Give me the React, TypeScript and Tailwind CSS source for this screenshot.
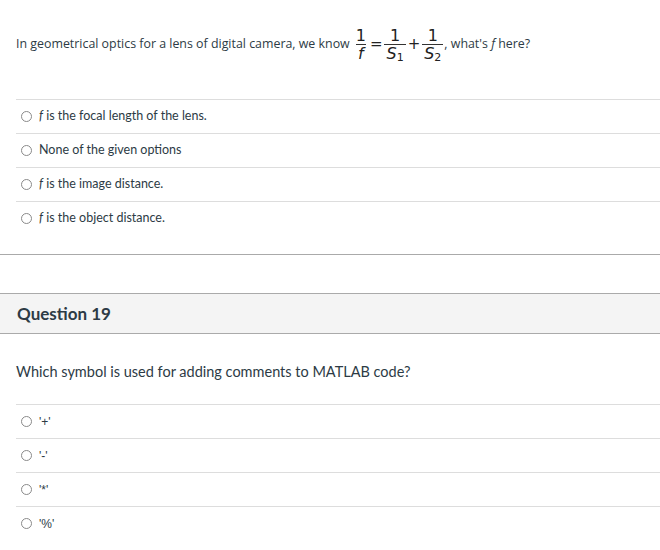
const Radio = () => (
  <span className="inline-block w-[11px] h-[11px] rounded-full border border-[#8a8a8a] bg-white shrink-0" />
);

const Frac = ({ top, bottom }: { top: React.ReactNode; bottom: React.ReactNode }) => (
  <span className="inline-flex flex-col items-center mx-[1px]">
    <span className="text-[16px] leading-[17px] px-[2px]">{top}</span>
    <span className="text-[16px] leading-[18px] px-[2px] border-t border-[#333]">{bottom}</span>
  </span>
);

const optionsA = [
  { f: true, text: " is the focal length of the lens." },
  { f: false, text: "None of the given options" },
  { f: true, text: " is the image distance." },
  { f: true, text: " is the object distance." },
];

const optionsB = ["'+'", "'-'", "'*'", "'%'"];

export default function App() {
  return (
    <div className="w-[660px] h-[550px] bg-white overflow-hidden text-[#2d3b45]" style={{ fontFamily: "Lato, sans-serif" }}>
      <div className="h-[99px] pl-4 flex items-center pb-[10px]">
        <span className="text-[12.4px]" style={{ fontFamily: "'Open Sans', sans-serif" }}>
          In geometrical optics for a lens of digital camera, we know
        </span>
        <span className="ml-[3px] inline-flex items-center text-[15px] text-[#222]" style={{ fontFamily: "'DejaVu Sans', sans-serif" }}>
          <Frac top="1" bottom={<i>f</i>} />
          <span className="mx-[1px]">=</span>
          <Frac top="1" bottom={<i>S<sub className="text-[11px] not-italic">1</sub></i>} />
          <span className="mx-[1px]">+</span>
          <Frac top="1" bottom={<i>S<sub className="text-[11px] not-italic">2</sub></i>} />
        </span>
        <span className="text-[12.4px]" style={{ fontFamily: "'Open Sans', sans-serif" }}>
          , what's <i>f</i> here?
        </span>
      </div>

      <div className="ml-4">
        {optionsA.map((o, i) => (
          <div key={i} className="h-[34px] border-t border-[#dddddd] flex items-center pl-[5px] gap-[7px] text-[12.5px]">
            <Radio />
            <span>
              {o.f && <i>f</i>}
              {o.text}
            </span>
          </div>
        ))}
      </div>

      <div className="h-[19px]" />
      <div className="h-[39px] border-t border-[#aaaaaa]" />
      <div className="h-[41px] border-y border-[#aaaaaa] bg-[#f4f4f4] flex items-center pl-[17px]">
        <span className="text-[17px] font-bold">Question 19</span>
      </div>

      <div className="h-[70px] pl-4 flex items-center pt-[6px]">
        <span className="text-[14.5px]">Which symbol is used for adding comments to MATLAB code?</span>
      </div>

      <div className="ml-4">
        {optionsB.map((o, i) => (
          <div key={i} className="h-[34px] border-t border-[#dddddd] flex items-center pl-[5px] gap-[7px] text-[12px]" style={{ fontFamily: "'Liberation Sans', Arial, sans-serif" }}>
            <Radio />
            <span>{o}</span>
          </div>
        ))}
      </div>
    </div>
  );
}
